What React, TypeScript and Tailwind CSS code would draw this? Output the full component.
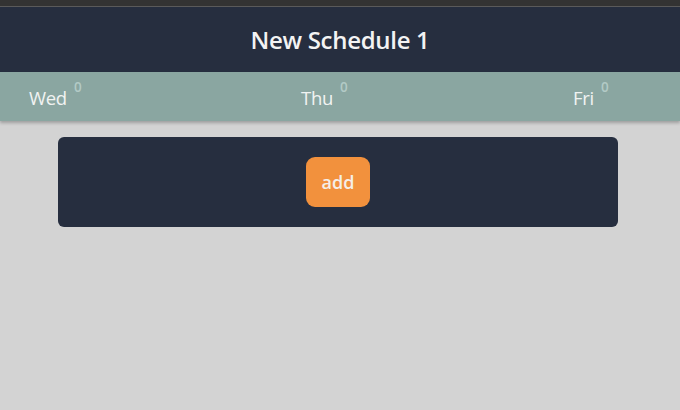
import React from 'react';

const days = [
  { name: 'Wed', count: 0 },
  { name: 'Thu', count: 0 },
  { name: 'Fri', count: 0 },
];

export default function App() {
  return (
    <div
      className="min-h-[410px] w-[680px] bg-[#d3d3d3] overflow-hidden"
      style={{ fontFamily: '"Open Sans", "Noto Sans", sans-serif' }}
    >
      {/* Window strip */}
      <div className="h-[6px] bg-[#333333]" />
      <div className="h-px bg-[#5a5a5a]" />

      {/* Header */}
      <header className="h-[65px] bg-[#262e3f] flex items-center justify-center">
        <h1 className="text-[24px] font-semibold text-[#f3f3f3] tracking-[-0.3px]">New Schedule 1</h1>
      </header>

      {/* Day tabs */}
      <nav className="h-[49px] bg-[#8aa6a1] flex shadow-[0_2px_3px_rgba(0,0,0,0.25)] relative">
        {days.map((d) => (
          <div key={d.name} className="w-[272px] shrink-0 pl-[29px] flex items-center">
            <span className="text-[18.5px] text-[#f1f3f2] leading-none mt-[4px] tracking-[-0.3px]">{d.name}</span>
            <span className="ml-[7px] -mt-[18px] text-[13.5px] leading-none font-semibold text-[#b3cac6]">{d.count}</span>
          </div>
        ))}
      </nav>

      {/* Schedule body */}
      <main className="pt-[16px]">
        <div className="ml-[58px] w-[560px] h-[90px] rounded-[6px] bg-[#262e3f] flex items-center justify-center">
          <button className="w-[64px] h-[50px] rounded-[9px] bg-[#f2913d] text-[18px] font-semibold text-[#f5efe8]">
            add
          </button>
        </div>
      </main>
    </div>
  );
}
